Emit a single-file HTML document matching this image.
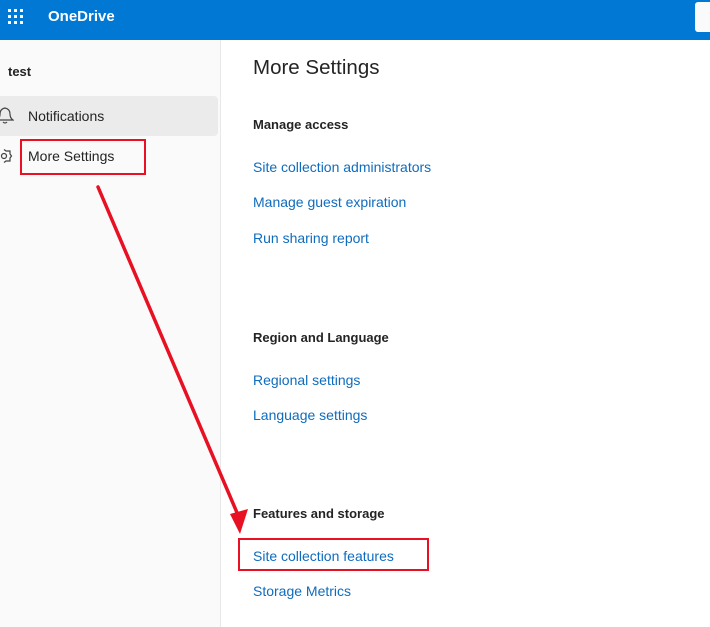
<!DOCTYPE html>
<html><head><style>
body{margin:0;width:710px;height:627px;overflow:hidden;font-family:"Liberation Sans",sans-serif;background:#fff;position:relative}
.hdr{position:absolute;left:0;top:0;width:710px;height:40px;background:#0078d4}
.side{position:absolute;left:0;top:40px;width:220px;height:587px;background:#fafafa;border-right:1px solid #e8e8e8}
.t{position:absolute;white-space:nowrap}
.l{color:#0f6cbd;font-size:14px}
.h{color:#242424;font-size:13px;font-weight:bold}
</style></head><body>
<div class="hdr"></div>
<svg class="t" style="left:8px;top:9px" width="16" height="16" fill="#fff">
<rect x="0" y="0" width="3" height="3"/><rect x="6" y="0" width="3" height="3"/><rect x="12" y="0" width="3" height="3"/>
<rect x="0" y="6" width="3" height="3"/><rect x="6" y="6" width="3" height="3"/><rect x="12" y="6" width="3" height="3"/>
<rect x="0" y="12" width="3" height="3"/><rect x="6" y="12" width="3" height="3"/><rect x="12" y="12" width="3" height="3"/></svg>
<div class="t" style="left:48px;top:8px;color:#fff;font-size:15px;font-weight:bold">OneDrive</div>
<div style="position:absolute;left:695px;top:2px;width:20px;height:30px;background:#fafafa;border-radius:3px"></div>
<div class="side"></div>
<div class="t" style="left:8px;top:64px;font-size:13px;font-weight:bold;color:#242424">test</div>
<div style="position:absolute;left:0;top:96px;width:218px;height:40px;background:#ebebeb;border-radius:0 4px 4px 0"></div>
<svg class="t" style="left:0;top:107px" width="14" height="18" fill="none" stroke="#424242" stroke-width="1.2"><path d="M-3 13 Q0 11 0 7 Q0 2 5 1 Q10 2 10 7 Q10 11 13 13 Z M3 15 Q5 17 7 15"/></svg>
<div class="t" style="left:28px;top:108px;font-size:14px;color:#242424">Notifications</div>
<svg class="t" style="left:0;top:148px" width="14" height="16" fill="none" stroke="#424242" stroke-width="1.2"><circle cx="4" cy="8" r="2.5"/><path d="M4 1.5 L6 3 L10 3 L10 6 L11.5 8 L10 10 L10 13 L6 13 L4 14.5"/></svg>
<div class="t" style="left:28px;top:148px;font-size:14px;color:#242424">More Settings</div>
<div style="position:absolute;left:20px;top:139px;width:122px;height:32px;border:2px solid #e81123"></div>
<div class="t" style="left:253px;top:56px;font-size:20.5px;color:#242424">More Settings</div>
<div class="t h" style="left:253px;top:117px">Manage access</div>
<div class="t l" style="left:253px;top:159px">Site collection administrators</div>
<div class="t l" style="left:253px;top:194px">Manage guest expiration</div>
<div class="t l" style="left:253px;top:230px">Run sharing report</div>
<div class="t h" style="left:253px;top:330px">Region and Language</div>
<div class="t l" style="left:253px;top:372px">Regional settings</div>
<div class="t l" style="left:253px;top:407px">Language settings</div>
<div class="t h" style="left:253px;top:506px">Features and storage</div>
<div class="t l" style="left:253px;top:548px">Site collection features</div>
<div class="t l" style="left:253px;top:583px">Storage Metrics</div>
<div style="position:absolute;left:238px;top:538px;width:187px;height:29px;border:2px solid #e81123"></div>
<svg class="t" style="left:0;top:0" width="710" height="627"><line x1="98" y1="187" x2="238" y2="515" stroke="#e81123" stroke-width="3.5" stroke-linecap="round"/><polygon points="240,534 230,514 248,509" fill="#e81123"/></svg>
</body></html>
